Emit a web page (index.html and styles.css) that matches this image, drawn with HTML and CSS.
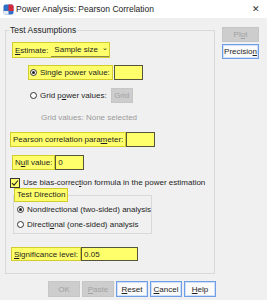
FILE: index.html
```html
<!DOCTYPE html>
<html lang="en">
  <head>
    <meta charset="UTF-8" />
    <title>Power Analysis: Pearson Correlation</title>
    <link rel="stylesheet" href="styles.css">
  </head>
  <body>
    <div class="titlebar">
      <svg class="appicon" width="11" height="11" viewBox="0 0 11 11">
        <rect x="0.5" y="0.5" width="10" height="10" rx="2" fill="#2f6fc6" />
        <path d="M5.5 0.5 H8.5 A2 2 0 0 1 10.5 2.5 V7 H5.5 Z" fill="#d8283a" />
        <path d="M0.5 7 H5.5 V10.5 H2.5 A2 2 0 0 1 0.5 8.5 Z" fill="#e9e9f2" />
      </svg>
      <span class="title">Power Analysis: Pearson Correlation</span>
      <span class="close">&#x2715;</span>
    </div>

    <div class="main">
      <fieldset class="group">
        <legend>Test Assumptions</legend>

        <div class="row estimate">
          <span class="hl"><u>E</u>stimate:</span>
          <span class="combo">Sample size <span class="chev">&#x2304;</span></span>
        </div>

        <div class="row single">
          <span class="hl"><span class="radio on"></span>Sin<u>g</u>le power value:</span>
          <span class="field"></span>
        </div>

        <div class="row grid">
          <span class="radio"></span>
          <span class="lbl">Grid p<u>o</u>wer values:</span>
          <span class="btn off small">Grid</span>
        </div>

        <div class="row gridvals">Grid values: None selected</div>

        <div class="row pearson">
          <span class="hl">Pearson correlation para<u>m</u>eter:</span>
          <span class="field"></span>
        </div>

        <div class="row nullv">
          <span class="hl">N<u>u</u>ll value:</span>
          <span class="field">0</span>
        </div>

        <div class="row check">
          <span class="box">
            <svg width="8" height="8" viewBox="0 0 8 8"><path d="M1 4.2 L3 6.2 L7 1.5" fill="none" stroke="#222" stroke-width="1.1" /></svg>
          </span>
          <span>Use bias-correc<u>t</u>ion formula in the power estimation</span>
        </div>

        <fieldset class="direction">
          <legend>Test Direction</legend>
          <div class="row opt first"><span class="radio on"></span>Nondirectional (two-sided) analysis</div>
          <div class="row opt"><span class="radio"></span>Directi<u>o</u>nal (one-sided) analysis</div>
        </fieldset>

        <div class="row signif">
          <span class="hl"><u>S</u>ignificance level:</span>
          <span class="field wide">0.05</span>
        </div>
      </fieldset>

      <div class="side">
        <span class="btn off">Pl<u>o</u>t</span>
        <span class="btn">Precisio<u>n</u></span>
      </div>
    </div>

    <div class="bottom">
      <span class="btn off">OK</span>
      <span class="btn off"><u>P</u>aste</span>
      <span class="btn"><u>R</u>eset</span>
      <span class="btn"><u>C</u>ancel</span>
      <span class="btn"><u>H</u>elp</span>
    </div>
  </body>
</html>
```
FILE: styles.css
```css
body {
  margin: 0;
  width: 267px;
  height: 300px;
  background-color: #f0f0f0;
  font-family: "Liberation Sans", Arial, sans-serif;
  font-size: 8px;
  color: #1e1e1e;
  overflow: hidden;
}
u {
  text-decoration-thickness: 1px;
  text-underline-offset: 1px;
}
.titlebar {
  height: 18px;
  background-color: #fff;
  display: flex;
  align-items: center;
  padding-left: 3px;
}
.appicon {
  margin-right: 2px;
}
.title {
  font-size: 8.5px;
  color: #222;
}
.close {
  margin-left: auto;
  margin-right: 7px;
  font-size: 9px;
  color: #333;
}
.main {
  display: flex;
  padding: 6px 0 0 5px;
}
.group {
  margin: 0;
  width: 210px;
  height: 250px;
  box-sizing: border-box;
  border: 1px solid #d9d9d9;
  padding: 0 0 0 3px;
}
.group > legend {
  padding: 0 1px;
  font-size: 8.5px;
  line-height: 12px;
}
.row {
  display: flex;
  align-items: center;
  white-space: nowrap;
}
.hl {
  display: flex;
  align-items: center;
  height: 100%;
  box-sizing: border-box;
  background-color: #ffff6b;
  border: 1px solid #d4cc2c;
  padding: 0 2px;
}
.field {
  height: 100%;
  box-sizing: border-box;
  width: 29px;
  background-color: #ffff6b;
  border: 1px solid #55553a;
  padding-left: 2px;
  display: flex;
  align-items: center;
}
.field.wide {
  width: 57px;
}
.radio {
  width: 5px;
  height: 5px;
  border: 1px solid #333;
  border-radius: 50%;
  background-color: #fff;
  margin-right: 3px;
  position: relative;
  flex: none;
}
.radio.on::after {
  content: "";
  position: absolute;
  left: 1px;
  top: 1px;
  width: 3px;
  height: 3px;
  border-radius: 50%;
  background-color: #222;
}
.estimate {
  margin-top: 6px;
  height: 16px;
  margin-left: 3px;
  width: 98px;
  background-color: #ffff6b;
  border: 1px solid #d4cc2c;
  box-sizing: border-box;
}
.estimate .hl {
  border: none;
  padding: 0 3px 0 2px;
}
.combo {
  display: flex;
  align-items: center;
  height: 100%;
  flex: 1;
  box-sizing: border-box;
  border-bottom: 1px solid #8a8a50;
  padding-left: 3px;
}
.chev {
  font-size: 7px;
  margin-left: 4px;
  position: relative;
  top: -2px;
}
.single {
  margin-top: 7px;
  height: 15px;
  margin-left: 19px;
}
.single .hl {
  padding-left: 1px;
  margin-right: 1px;
}
.grid {
  margin-top: 8px;
  height: 15px;
  margin-left: 21px;
}
.grid .lbl {
  margin-right: 4px;
}
.btn {
  display: flex;
  align-items: center;
  justify-content: center;
  box-sizing: border-box;
  height: 15px;
  background-color: #fbfbfb;
  border: 1px solid #6d9ee6;
  box-shadow: inset 0 0 0 1px #cfe0f8;
}
.btn.off {
  background-color: #cdcdcd;
  border-color: #c6c6c6;
  box-shadow: none;
  color: #a2a2a2;
}
.btn.small {
  width: 22px;
}
.gridvals {
  margin-top: 9px;
  height: 10px;
  margin-left: 32px;
  color: #9a9a9a;
}
.pearson {
  margin-top: 10px;
  height: 15px;
  margin-left: 1px;
}
.nullv {
  margin-top: 8px;
  height: 15px;
  margin-left: 3px;
}
.check {
  margin-top: 7px;
  height: 11px;
  margin-left: 1px;
}
.box {
  width: 8px;
  height: 8px;
  border: 1px solid #333;
  background-color: #ffff6b;
  margin-right: 3px;
  display: flex;
}
.direction {
  margin: 0 0 0 4px;
  width: 139px;
  height: 46px;
  box-sizing: border-box;
  border: 1px solid #d9d9d9;
  padding: 0 0 0 2px;
}
.direction > legend {
  margin-left: -2px;
  padding: 0 2px;
  line-height: 12px;
  background-color: #ffff6b;
  border: 1px solid #d4cc2c;
}
.opt {
  height: 12px;
  margin-left: 1px;
  margin-top: 3px;
}
.opt.first {
  margin-top: 1px;
}
.signif {
  margin-top: 13px;
  height: 14px;
  margin-left: 2px;
}
.side {
  display: flex;
  flex-direction: column;
  gap: 2px;
  margin: 3px 0 0 7px;
}
.side .btn {
  width: 37px;
}
.bottom {
  display: flex;
  gap: 2px;
  padding: 7px 0 0 48px;
}
.bottom .btn {
  width: 32px;
  height: 16px;
}
```
